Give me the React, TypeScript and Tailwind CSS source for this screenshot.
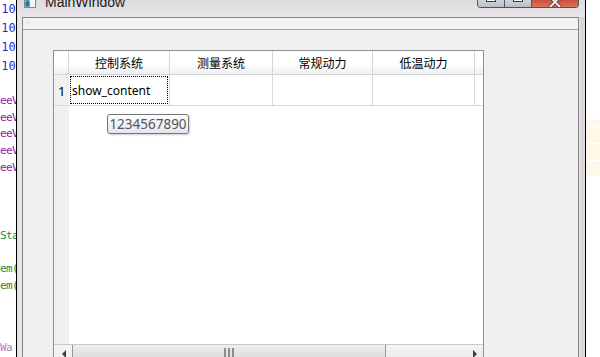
const COLS = [
  { label: "控制系统", w: "w-[101px]" },
  { label: "测量系统", w: "w-[103px]" },
  { label: "常规动力", w: "w-[100px]" },
  { label: "低温动力", w: "w-[102px]" },
];

function CodeStrip() {
  return (
    <div className="flex w-[16px] shrink-0 flex-col overflow-hidden bg-white font-['DejaVu_Sans_Mono',monospace] whitespace-nowrap">
      <div className="-ml-[6px] flex h-[19px] items-center text-[12px] text-[#2b2bd0]">.10</div>
      <div className="-ml-[6px] flex h-[19px] items-center text-[12px] text-[#2b2bd0]">.10</div>
      <div className="-ml-[6px] flex h-[19px] items-center text-[12px] text-[#2b2bd0]">.10</div>
      <div className="-ml-[6px] flex h-[19px] items-center text-[12px] text-[#2b2bd0]">.10</div>
      <div className="h-[17px]" />
      <div className="flex h-[17px] items-center text-[11px] tracking-[-0.6px] text-[#8d1c9e]">eeView</div>
      <div className="flex h-[17px] items-center text-[11px] tracking-[-0.6px] text-[#8d1c9e]">eeView</div>
      <div className="flex h-[17px] items-center text-[11px] tracking-[-0.6px] text-[#8d1c9e]">eeView</div>
      <div className="flex h-[17px] items-center text-[11px] tracking-[-0.6px] text-[#8d1c9e]">eeView</div>
      <div className="flex h-[17px] items-center text-[11px] tracking-[-0.6px] text-[#8d1c9e]">eeView</div>
      <div className="h-[51px]" />
      <div className="flex h-[17px] items-center text-[11px] tracking-[-0.6px] text-[#1f8a3a]">Start</div>
      <div className="h-[16px]" />
      <div className="flex h-[17px] items-center text-[11px] tracking-[-0.6px] text-[#1f8a3a]">em()</div>
      <div className="flex h-[17px] items-center text-[11px] tracking-[-0.6px] text-[#1f8a3a]">em()</div>
      <div className="h-[46px]" />
      <div className="flex h-[17px] items-center text-[11px] tracking-[-0.6px] text-[#b07cc6]">Wa</div>
    </div>
  );
}

function TitleBar() {
  return (
    <div className="flex h-[17px] shrink-0 items-start bg-linear-to-b from-[#dedbde] to-[#e9e6e9]">
      <svg width="12" height="12" viewBox="0 0 12 12" className="-mt-[4px] ml-[7px] shrink-0">
        <rect x="0.5" y="0.5" width="11" height="11" fill="#f4f6f8" stroke="#7d8790" />
        <rect x="1.5" y="1.5" width="4" height="9" fill="#3d9a8a" />
        <rect x="1.5" y="6" width="4" height="4.5" fill="#2f6fb5" />
      </svg>
      <div className="-mt-[5px] ml-[9px] h-[14px] font-['Liberation_Sans',sans-serif] text-[14px] leading-[14px] text-[#1b1b1b]">
        MainWindow
      </div>
      <div className="mr-[6px] ml-auto flex h-[8px] overflow-hidden rounded-b-[4px] border border-t-0 border-[#4b5461]">
        <div className="flex w-[27px] justify-center border-r border-[#4b5461] bg-linear-to-b from-[#cfd3d9] to-[#b9bec6]">
          <div className="h-[2px] w-[10px] border-x border-b border-[#3a3f47] bg-white" />
        </div>
        <div className="flex w-[27px] justify-center border-r border-[#4b5461] bg-linear-to-b from-[#cfd3d9] to-[#b9bec6]">
          <div className="h-[2px] w-[10px] border-x border-b border-[#3a3f47] bg-white" />
        </div>
        <div className="flex w-[46px] justify-center bg-linear-to-b from-[#c9503c] to-[#d9725a]">
          <svg width="12" height="8" viewBox="0 0 12 8">
            <path d="M1 -3 L6 2 L11 -3 M1 7 L6 2 L11 7" stroke="#3b2a28" strokeWidth="3.2" fill="none" />
            <path d="M1 -3 L6 2 L11 -3 M1 7 L6 2 L11 7" stroke="#ffffff" strokeWidth="1.8" fill="none" />
          </svg>
        </div>
      </div>
    </div>
  );
}

function Scrollbar() {
  return (
    <div className="flex h-[18px] shrink-0 border-t border-[#c9c9c9] bg-[#f2f2f2]">
      <div className="flex w-[18px] items-center justify-center pl-[1px]">
        <div className="h-0 w-0 border-y-[4px] border-r-[4px] border-y-transparent border-r-[#3c3c3c]" />
      </div>
      <div className="flex w-[314px] justify-center border-x border-[#979797] bg-linear-to-b from-[#efefef] to-[#d6d6d6] pt-[3px]">
        <div className="flex h-[9px] gap-[2px]">
          <div className="w-[2px] border-x border-[#8c8c8c] bg-white" />
          <div className="w-[2px] border-x border-[#8c8c8c] bg-white" />
          <div className="w-[2px] border-x border-[#8c8c8c] bg-white" />
        </div>
      </div>
      <div className="flex flex-1 items-center justify-end bg-linear-to-b from-[#f4f4f4] to-[#e8e8e8] pr-[6px]">
        <div className="h-0 w-0 border-y-[4px] border-l-[4px] border-y-transparent border-l-[#3c3c3c]" />
      </div>
    </div>
  );
}

function Table() {
  return (
    <div className="relative flex h-[313px] w-[431px] flex-col border border-[#8f9092] bg-white font-['Noto_Sans','Noto_Sans_CJK_SC',sans-serif] text-[12px] text-black">
      <div className="flex h-[24px] shrink-0 border-b border-[#d5d5d5] bg-linear-to-b from-white via-white to-[#eef0f2]">
        <div className="w-[15px] border-r border-[#d5d5d5]" />
        {COLS.map((c) => (
          <div key={c.label} className={`${c.w} flex items-center justify-center border-r border-[#d5d5d5] font-['Noto_Sans_CJK_SC',sans-serif]`}>
            {c.label}
          </div>
        ))}
        <div className="flex-1" />
      </div>

      <div className="flex h-[269px] shrink-0">
        <div className="w-[15px] bg-[#f0f0f0]">
          <div className="flex h-[31px] items-center border-b border-[#d8d8d8] pt-[3px] pl-[4px] text-[13px]">1</div>
        </div>
        <div className="flex-1">
          <div className="flex h-[31px] border-b border-[#d8d8d8]">
            {COLS.map((c, i) => (
              <div key={c.label} className={`${c.w} border-r border-[#d8d8d8]`}>
                {i === 0 && (
                  <div className="m-[1px] flex h-[28px] items-center border border-dotted border-black pt-[2px] pl-[1px]">
                    show_content
                  </div>
                )}
              </div>
            ))}
            <div className="flex-1" />
          </div>
        </div>
      </div>

      <Scrollbar />

      <div className="absolute top-[63px] left-[53px] flex h-[20px] w-[82px] items-center justify-center rounded-[3px] border border-[#767676] bg-linear-to-b from-white to-[#e4e5f0] text-[13.5px] text-[#555] shadow-[1px_1px_2px_rgba(0,0,0,0.2)]">
        1234567890
      </div>
    </div>
  );
}

function Window() {
  return (
    <div className="flex w-[570px] shrink-0 flex-col border-x border-black">
      <TitleBar />
      <div className="flex flex-1">
        <div className="w-[5px] bg-linear-to-r from-[#e6dfe4] to-[#eee9ec]" />
        <div className="flex w-[557px] flex-col border-x border-t border-[#858585] bg-[#f0f0f0]">
          <div className="h-[12px] shrink-0 border-b border-[#a3a3a3] bg-[#f2f2f2] pt-[4px] pl-[4px]">
            <div className="h-[1px] w-[1px] bg-[#9a9a9a]" />
          </div>
          <div className="flex-1 pt-[20px] pl-[30px]">
            <Table />
          </div>
        </div>
        <div className="w-[6px] bg-linear-to-r from-[#e8e3e6] via-[#d6cfd3] to-[#e2dce0]" />
      </div>
    </div>
  );
}

function RightStrip() {
  return (
    <div className="flex w-[14px] shrink-0 flex-col bg-white">
      <div className="h-[120px]" />
      <div className="h-[6px] bg-[#fdf8e7]" />
      <div className="mt-[1px] h-[16px] bg-[#fdf8e7]" />
      <div className="mt-[1px] h-[16px] bg-[#fdf8e7]" />
      <div className="mt-[1px] h-[15px] bg-[#fdf8e7]" />
    </div>
  );
}

export default function App() {
  return (
    <div className="flex h-[357px] w-[600px] overflow-hidden bg-white">
      <CodeStrip />
      <Window />
      <RightStrip />
    </div>
  );
}
